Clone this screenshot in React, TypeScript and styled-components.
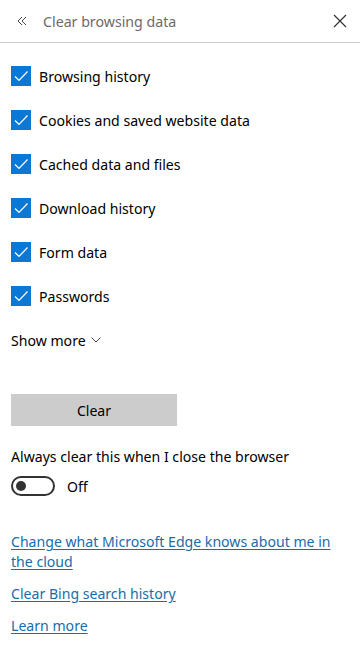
import React, { useState } from 'react';
import styled, { createGlobalStyle } from 'styled-components';

const GlobalStyle = createGlobalStyle`
    html, body {
        margin: 0;
        padding: 0;
        background: #ffffff;
    }
    body {
        font-family: "Noto Sans", "Open Sans", sans-serif;
        -webkit-font-smoothing: antialiased;
    }
`

const Panel = styled.div`
    width: 360px;
    min-height: 657px;
    background: #ffffff;
    color: #000000;
`

const Header = styled.header`
    display: flex;
    align-items: center;
    height: 43px;
    border-bottom: 1px solid #cccccc;
    padding: 0 10px 0 12px;
    box-sizing: border-box;
`

const IconButton = styled.button`
    display: flex;
    align-items: center;
    justify-content: center;
    border: none;
    background: none;
    padding: 0;
    width: 20px;
    height: 20px;
    color: #333333;
    cursor: pointer;
`

const Title = styled.h1`
    flex: 1;
    margin: 0 0 0 11px;
    font-size: 14.2px;
    font-weight: 400;
    color: #6b6b6b;
`

const Body = styled.div`
    padding: 23px 11px 0;
`

const OptionList = styled.div`
    display: flex;
    flex-direction: column;
    gap: 24px;
`

const Option = styled.label`
    display: flex;
    align-items: center;
    gap: 8px;
    height: 20px;
    font-size: 14.1px;
    cursor: pointer;
`

const Box = styled.span<{ checked: boolean }>`
    display: flex;
    align-items: center;
    justify-content: center;
    width: 20px;
    height: 20px;
    background: ${props => props.checked ? '#0a78d4' : '#ffffff'};
    border: ${props => props.checked ? 'none' : '2px solid #333'};
    box-sizing: border-box;
`

const ShowMore = styled.button`
    display: flex;
    align-items: center;
    gap: 5px;
    margin-top: 24px;
    border: none;
    background: none;
    padding: 0;
    font-family: inherit;
    font-size: 14.1px;
    color: #000000;
    height: 20px;
`

const ClearButton = styled.button`
    display: block;
    margin-top: 44px;
    width: 166px;
    height: 32px;
    border: none;
    background: #cccccc;
    font-family: inherit;
    font-size: 14.1px;
    color: #000000;
`

const AutoLabel = styled.div`
    margin-top: 21px;
    font-size: 14.1px;
    line-height: 20px;
`

const ToggleRow = styled.div`
    display: flex;
    align-items: center;
    gap: 12px;
    margin-top: 9px;
    font-size: 14.1px;
`

const Track = styled.span<{ on: boolean }>`
    position: relative;
    width: 44px;
    height: 20px;
    border: 2px solid #333333;
    border-radius: 10px;
    box-sizing: border-box;
    background: ${props => props.on ? '#0a78d4' : '#ffffff'};
`

const Knob = styled.span<{ on: boolean }>`
    position: absolute;
    top: 3px;
    left: ${props => props.on ? '27px' : '3px'};
    width: 10px;
    height: 10px;
    border-radius: 50%;
    background: ${props => props.on ? '#ffffff' : '#333333'};
`

const Links = styled.div`
    display: flex;
    flex-direction: column;
    gap: 12px;
    margin-top: 36px;
`

const Link = styled.a`
    font-size: 14.1px;
    line-height: 20px;
    color: #1a6ca8;
    text-decoration: underline;
    text-underline-offset: 2px;
`

const options = [
    'Browsing history',
    'Cookies and saved website data',
    'Cached data and files',
    'Download history',
    'Form data',
    'Passwords',
]

const App: React.FC = () => {
    const [checked, setChecked] = useState<boolean[]>(options.map(() => true))
    const [on, setOn] = useState(false)

    return (
        <>
        <GlobalStyle />
        <Panel>
            <Header>
                <IconButton aria-label="Back">
                    <svg width="10" height="10" viewBox="0 0 10 10" fill="none" stroke="#444" strokeWidth="1">
                        <path d="M5 1L1 5L5 9" />
                        <path d="M9 1L5 5L9 9" />
                    </svg>
                </IconButton>
                <Title>Clear browsing data</Title>
                <IconButton aria-label="Close">
                    <svg width="14" height="14" viewBox="0 0 14 14" fill="none" stroke="#333" strokeWidth="1.2">
                        <path d="M1 1L13 13M13 1L1 13" />
                    </svg>
                </IconButton>
            </Header>
            <Body>
                <OptionList>
                    {options.map((label, i) => (
                        <Option key={label} onClick={() => setChecked(c => c.map((v, j) => j === i ? !v : v))}>
                            <Box checked={checked[i]}>
                                {checked[i] && (
                                    <svg width="16" height="16" viewBox="0 0 16 16" fill="none" stroke="#fff" strokeWidth="1.2">
                                        <path d="M2 8.5L6 12.5L14.5 3.5" />
                                    </svg>
                                )}
                            </Box>
                            {label}
                        </Option>
                    ))}
                </OptionList>
                <ShowMore>
                    Show more
                    <svg width="10" height="6" viewBox="0 0 10 6" fill="none" stroke="#444" strokeWidth="1">
                        <path d="M0.5 0.5L5 5L9.5 0.5" />
                    </svg>
                </ShowMore>
                <ClearButton>Clear</ClearButton>
                <AutoLabel>Always clear this when I close the browser</AutoLabel>
                <ToggleRow onClick={() => setOn(v => !v)}>
                    <Track on={on}><Knob on={on} /></Track>
                    {on ? 'On' : 'Off'}
                </ToggleRow>
                <Links>
                    <Link href="#">Change what Microsoft Edge knows about me in the cloud</Link>
                    <Link href="#">Clear Bing search history</Link>
                    <Link href="#">Learn more</Link>
                </Links>
            </Body>
        </Panel>
        </>
    )
}

export default App
